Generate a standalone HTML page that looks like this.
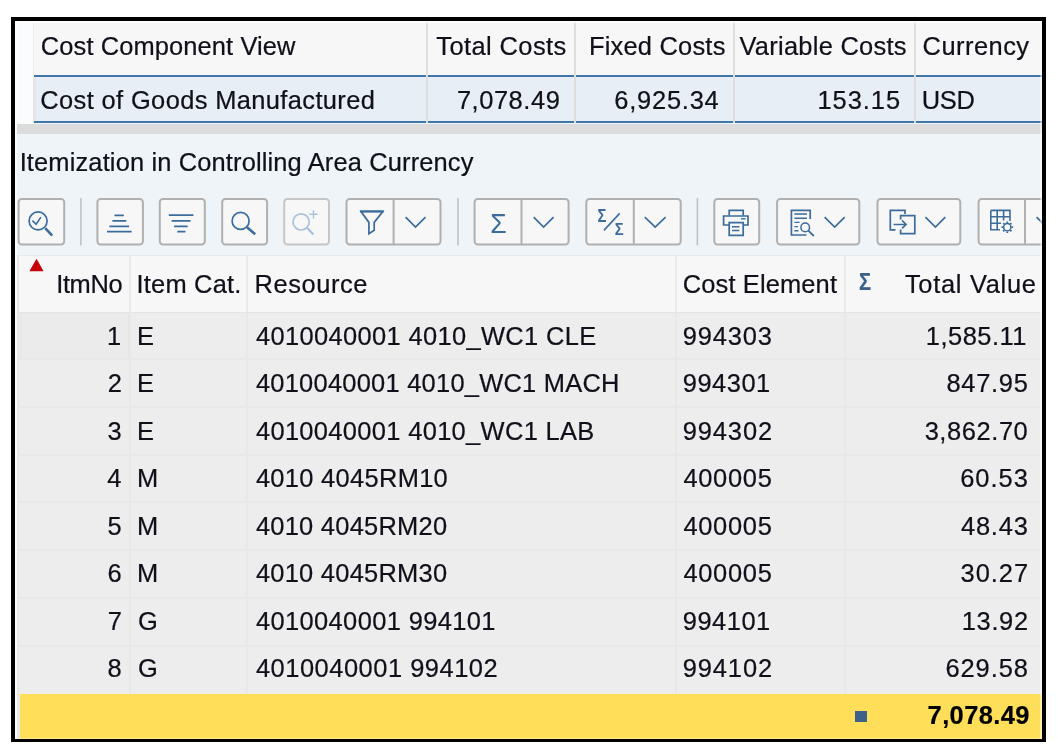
<!DOCTYPE html>
<html lang="en">
<head>
<meta charset="utf-8">
<title>Cost Component View</title>
<style>
html,body{margin:0;padding:0;background:#fff;}
body{width:1058px;height:755px;overflow:hidden;position:relative;font-family:"Liberation Sans",Arial,sans-serif;font-size:25.44px;color:#10101a;}
#frame{position:absolute;left:11px;top:17px;width:1027px;height:718px;border:4px solid #000;border-bottom-width:3px;overflow:hidden;background:#eff4f9;}
#in{position:absolute;left:-15px;top:-21px;width:1058px;height:755px;filter:blur(0.55px);}
.abs{position:absolute;}
.t{position:absolute;white-space:nowrap;line-height:30px;height:30px;-webkit-text-stroke:0.22px currentColor;}
.vl{position:absolute;width:1.6px;background:#dedede;}
.btn{position:absolute;top:198px;height:47.5px;box-sizing:border-box;border:2px solid #b0b0b0;border-radius:4.5px;background:#f7f7f7;}
.sep{position:absolute;top:198px;height:47.5px;width:1.5px;background:#c4c4c4;}
.dv{position:absolute;top:0;bottom:0;width:1.6px;background:#b0b0b0;}
svg{position:absolute;left:0;top:0;overflow:visible;}
#halo{position:absolute;left:0;top:0;right:0;bottom:0;box-sizing:border-box;border-top:2px solid rgba(255,255,255,.85);border-left:2px solid rgba(255,255,255,.9);border-right:2px solid rgba(255,255,255,.5);border-bottom:1px solid rgba(255,255,255,.3);pointer-events:none;}
</style>
</head>
<body>
<div id="frame"><div id="in">

<!-- top table -->
<div class="abs" style="left:15px;top:21px;width:19px;height:102.5px;background:#fbfcfe;"></div>
<div class="abs" style="left:33px;top:21px;width:1010px;height:55px;background:#f7f7f7;"></div>
<div class="abs" style="left:33px;top:77px;width:1010px;height:45px;background:#e8eef6;"></div>
<div class="abs" style="left:32.8px;top:21px;width:1.6px;height:54.5px;background:#ececec;"></div>
<div class="abs" style="left:32.8px;top:77px;width:3px;height:46px;background:#e6e6e6;"></div>
<div class="abs" style="left:34.2px;top:75.2px;width:1010px;height:2.2px;background:#4176a8;"></div>
<div class="abs" style="left:34.2px;top:121.1px;width:1010px;height:2.2px;background:#4176a8;"></div>
<div class="vl" style="left:426px;top:21px;height:102px;"></div>
<div class="vl" style="left:574px;top:21px;height:102px;"></div>
<div class="vl" style="left:733px;top:21px;height:102px;"></div>
<div class="vl" style="left:914.2px;top:21px;height:102px;"></div>
<div class="abs" style="left:17px;top:123.5px;width:1030px;height:10px;background:#dcdcdc;"></div>

<div id="tb">
<svg width="1058" height="755" viewBox="0 0 1058 755" fill="none" stroke="#3c6c9c" stroke-width="1.7" stroke-linecap="butt" stroke-linejoin="miter">
<rect x="18.6" y="199.0" width="45.6" height="45.5" rx="3.2" fill="#f7f7f7" stroke="#b0b0b0" stroke-width="2"/>
<path d="M80.9,198.0 V245.5" stroke="#c2c2c2" stroke-width="1.6"/>
<rect x="97.4" y="199.0" width="45.5" height="45.5" rx="3.2" fill="#f7f7f7" stroke="#b0b0b0" stroke-width="2"/>
<rect x="159.8" y="199.0" width="45.0" height="45.5" rx="3.2" fill="#f7f7f7" stroke="#b0b0b0" stroke-width="2"/>
<rect x="222.2" y="199.0" width="44.9" height="45.5" rx="3.2" fill="#f7f7f7" stroke="#b0b0b0" stroke-width="2"/>
<rect x="284.2" y="199.0" width="44.8" height="45.5" rx="3.2" fill="#f7f7f7" stroke="#c6c6c6" stroke-width="2"/>
<rect x="346.5" y="199.0" width="94.0" height="45.5" rx="3.2" fill="#f7f7f7" stroke="#b0b0b0" stroke-width="2"/><path d="M393.6,199.0 V244.5" stroke="#b0b0b0" stroke-width="2"/>
<path d="M458.0,198.0 V245.5" stroke="#c2c2c2" stroke-width="1.6"/>
<rect x="474.6" y="199.0" width="94.0" height="45.5" rx="3.2" fill="#f7f7f7" stroke="#b0b0b0" stroke-width="2"/><path d="M521.5,199.0 V244.5" stroke="#b0b0b0" stroke-width="2"/>
<rect x="586.3" y="199.0" width="94.4" height="45.5" rx="3.2" fill="#f7f7f7" stroke="#b0b0b0" stroke-width="2"/><path d="M633.8,199.0 V244.5" stroke="#b0b0b0" stroke-width="2"/>
<path d="M697.4,198.0 V245.5" stroke="#c2c2c2" stroke-width="1.6"/>
<rect x="714.3" y="199.0" width="44.9" height="45.5" rx="3.2" fill="#f7f7f7" stroke="#b0b0b0" stroke-width="2"/>
<rect x="777.1" y="199.0" width="82.2" height="45.5" rx="3.2" fill="#f7f7f7" stroke="#b0b0b0" stroke-width="2"/>
<rect x="877.5" y="199.0" width="82.8" height="45.5" rx="3.2" fill="#f7f7f7" stroke="#b0b0b0" stroke-width="2"/>
<rect x="978.6" y="199.0" width="95.4" height="45.5" rx="3.2" fill="#f7f7f7" stroke="#b0b0b0" stroke-width="2"/><path d="M1025.0,199.0 V244.5" stroke="#b0b0b0" stroke-width="2"/>
<!-- 1 detail -->
<circle cx="38.1" cy="220.9" r="9.0"/>
<path d="M45.2,228.2 L52.2,235.6" stroke-width="2.6"/>
<path d="M32.4,220.6 L36.1,224.3 L40.9,217.1" stroke-width="1.6"/>
<!-- 2 sort asc -->
<path d="M114.4,215.4 H123.8 M112.4,220.9 H126.3 M109.4,226.3 H129.1 M107,231.6 H131.6"/>
<!-- 3 sort desc -->
<path d="M168.8,215.2 H193.4 M171.6,220.9 H190.5 M174.1,226.3 H187.7 M177.3,231.7 H185.4"/>
<!-- 4 search -->
<circle cx="240.6" cy="220.9" r="8.5"/>
<path d="M247,227.3 L255.2,234.2" stroke-width="2.6"/>
<!-- 5 search next (disabled) -->
<g stroke="#a9c1da">
<circle cx="301.1" cy="221.9" r="8.1"/>
<path d="M307,227.8 L313.4,234.5" stroke-width="2.2"/>
<path d="M309.4,214.3 H317.6 M313.5,210.2 V218.4" stroke-width="1.4"/>
</g>
<!-- 6 filter -->
<path d="M361,211.5 H382.8 L374.2,222.4 V230.2 L368.9,233.6 V222.4 Z"/><path d="M360,211.4 H383.8" stroke-width="2.2"/>
<path d="M405.6,217.1 L415.5,227 L425.5,217.1" />
<!-- 7 sum -->
<text x="490.3" y="232.6" font-size="28.3" fill="#3c6c9c" stroke="none" font-family="Liberation Sans, sans-serif" transform="translate(490.3 0) scale(0.94 1) translate(-490.3 0)">Σ</text>
<path d="M533.7,217.1 L543.6,227 L553.6,217.1" />
<!-- 8 subtotal -->
<text x="597.4" y="222" font-size="17.8" font-weight="bold" fill="#3c6c9c" stroke="none" font-family="Liberation Sans, sans-serif" transform="translate(597.4 0) scale(0.84 1) translate(-597.4 0)">Σ</text>
<path d="M603.9,230.4 L619.7,213.4" stroke-width="1.6"/>
<text x="614.7" y="234.6" font-size="15.6" font-weight="bold" fill="#3c6c9c" stroke="none" font-family="Liberation Sans, sans-serif" transform="translate(614.7 0) scale(0.95 1) translate(-614.7 0)">Σ</text>
<path d="M644.8,217.1 L655.2,227 L665.6,217.1" />
<!-- 9 print -->
<path d="M729.2,215.4 V210.3 H743.2 V215.4"/>
<path d="M729,225 H723.6 V216 H748 V225 H743.4"/>
<path d="M729.2,222.6 H743.2 V235.4 H729.2 Z"/>
<path d="M732,226.7 H739.4 M732,230.4 H739.4" stroke-width="1.5"/>
<path d="M741,218.8 H745.6" stroke-width="1.4"/>
<!-- 10 view -->
<path d="M806.5,235 H791.4 V210.3 H810.2 V219"/>
<path d="M794.4,214 H807 M794.4,218.2 H807 M794.4,222.4 H799.5 M794.4,226.6 H798 M794.4,230.8 H798.5" stroke-width="1.4"/>
<circle cx="805.2" cy="227.4" r="4.3" stroke-width="1.5"/>
<path d="M808.4,230.6 L813.8,236" stroke-width="1.8"/>
<path d="M824.6,217.1 L834.7,227 L844.7,217.1" />
<!-- 11 export -->
<path d="M905,214 V210.3 H890.3 V229.8 H895.5" />
<path d="M900.6,219.5 V215.6 H914.8 V233.6 H900.6 V229.4"/>
<path d="M893.6,224.4 H906.2 M902,220.4 L906.2,224.4 L902,228.4" stroke-width="1.5"/>
<path d="M925.4,217.1 L935.4,227 L945.3,217.1" />
<!-- 12 layout -->
<path d="M990.8,210.4 H1010 V221 M990.8,210.4 V229.8 H1000 M990.8,216.8 H1010 M990.8,223.2 H1001 M997.2,210.4 V229.8 M1003.6,210.4 V220.5" stroke-width="1.6"/>
<circle cx="1007.3" cy="227.2" r="3.6" stroke-width="1.5"/>
<path d="M1007.3,221.4 V223 M1007.3,231.4 V233 M1001.5,227.2 H1003.1 M1011.5,227.2 H1013.1 M1003.2,223.1 L1004.3,224.2 M1010.3,230.2 L1011.4,231.3 M1003.2,231.3 L1004.3,230.2 M1010.3,224.2 L1011.4,223.1" stroke-width="1.8"/>
<path d="M1036.6,217.1 L1046.5,227 L1056.4,217.1" />
</svg>
</div>

<div id="tbl">
<div class="abs" style="left:17.4px;top:254.6px;width:1030px;height:490px;background:#e9e9e9;"></div>
<div class="abs" style="left:19.4px;top:256.2px;width:1030px;height:56px;background:#f7f7f7;"></div>
<div class="abs" style="left:19.4px;top:311.6px;width:1030px;height:1.8px;background:#e5e5e5;"></div>
<div class="abs" style="left:19.4px;top:313.3px;width:1030px;height:381px;background:#ededed;"></div>
<div class="abs" style="left:19.6px;top:313.4px;width:109px;height:45.2px;background:#ebebeb;border:1.2px solid #e6e6e6;box-sizing:border-box;"></div>
<div class="abs" style="left:19.4px;top:358.3px;width:1030px;height:2px;background:#e8e8e8;"></div>
<div class="abs" style="left:19.4px;top:406.0px;width:1030px;height:2px;background:#e8e8e8;"></div>
<div class="abs" style="left:19.4px;top:453.7px;width:1030px;height:2px;background:#e8e8e8;"></div>
<div class="abs" style="left:19.4px;top:501.4px;width:1030px;height:2px;background:#e8e8e8;"></div>
<div class="abs" style="left:19.4px;top:549.1px;width:1030px;height:2px;background:#e8e8e8;"></div>
<div class="abs" style="left:19.4px;top:596.8px;width:1030px;height:2px;background:#e8e8e8;"></div>
<div class="abs" style="left:19.4px;top:644.5px;width:1030px;height:2px;background:#e8e8e8;"></div>
<div class="abs" style="left:129.0px;top:256.2px;width:2px;height:55.4px;background:#e9e9e9;"></div>
<div class="abs" style="left:129.0px;top:313.3px;width:2px;height:380.3px;background:#e8e8e8;"></div>
<div class="abs" style="left:246.3px;top:256.2px;width:2px;height:55.4px;background:#e9e9e9;"></div>
<div class="abs" style="left:246.3px;top:313.3px;width:2px;height:380.3px;background:#e8e8e8;"></div>
<div class="abs" style="left:674.6px;top:256.2px;width:2px;height:55.4px;background:#e9e9e9;"></div>
<div class="abs" style="left:674.6px;top:313.3px;width:2px;height:380.3px;background:#e8e8e8;"></div>
<div class="abs" style="left:844.4px;top:256.2px;width:2px;height:55.4px;background:#e9e9e9;"></div>
<div class="abs" style="left:844.4px;top:313.3px;width:2px;height:380.3px;background:#e8e8e8;"></div>
<svg width="1058" height="755" viewBox="0 0 1058 755"><path d="M36.5,258.8 L43.6,271.2 H29.4 Z" fill="#c4000a"/></svg>
<div class="abs" style="left:19.5px;top:693.6px;width:1030px;height:50px;background:#ffdf5a;"></div>
<div class="abs" style="left:854.8px;top:710.8px;width:12px;height:11px;background:#3e6189;"></div>
<div class="t" id="sg" style="left:859.3px;top:267.1px;font-size:23.4px;font-weight:bold;color:#3b618b;transform:scaleX(0.86);transform-origin:0 0;">Σ</div>
</div>

<div id="tx">
<div class="t" id="h1" style="left:40.81px;top:31.00px;letter-spacing:0.115px;">Cost Component View</div>
<div class="t" id="h2" style="left:436.33px;top:31.00px;letter-spacing:0.405px;">Total Costs</div>
<div class="t" id="h3" style="left:588.92px;top:31.00px;letter-spacing:0.218px;">Fixed Costs</div>
<div class="t" id="h4" style="left:739.49px;top:31.00px;letter-spacing:0.267px;">Variable Costs</div>
<div class="t" id="h5" style="left:922.61px;top:31.00px;letter-spacing:0.463px;">Currency</div>
<div class="t" id="d1" style="left:40.31px;top:84.60px;letter-spacing:0.375px;">Cost of Goods Manufactured</div>
<div class="t" id="d2" style="left:456.90px;top:84.60px;letter-spacing:0.553px;">7,078.49</div>
<div class="t" id="d3" style="left:614.31px;top:84.60px;letter-spacing:0.771px;">6,925.34</div>
<div class="t" id="d4" style="left:817.47px;top:84.60px;letter-spacing:0.956px;">153.15</div>
<div class="t" id="d5" style="left:921.74px;top:84.60px;letter-spacing:-0.320px;">USD</div>
<div class="t" id="ttl" style="left:19.66px;top:146.60px;letter-spacing:0.143px;">Itemization in Controlling Area Currency</div>
<div class="t" id="hc1" style="left:56.26px;top:269.20px;letter-spacing:-0.388px;">ItmNo</div>
<div class="t" id="hc2" style="left:136.56px;top:269.20px;letter-spacing:0.195px;">Item Cat.</div>
<div class="t" id="hc3" style="left:254.52px;top:269.20px;letter-spacing:0.590px;">Resource</div>
<div class="t" id="hc4" style="left:682.81px;top:269.20px;letter-spacing:0.134px;">Cost Element</div>
<div class="t" id="hc5" style="left:904.93px;top:269.20px;letter-spacing:0.701px;">Total Value</div>
<div class="t" id="a0" style="left:106.89px;top:320.90px;">1</div>
<div class="t" id="b0" style="left:137.12px;top:320.90px;">E</div>
<div class="t" id="c0" style="left:255.92px;top:320.90px;letter-spacing:0.363px;">4010040001 4010_WC1 CLE</div>
<div class="t" id="d0" style="left:682.81px;top:320.90px;letter-spacing:0.842px;">994303</div>
<div class="t" id="e0" style="left:925.87px;top:320.90px;letter-spacing:0.490px;">1,585.11</div>
<div class="t" id="a1" style="left:107.73px;top:368.34px;">2</div>
<div class="t" id="b1" style="left:137.12px;top:368.34px;">E</div>
<div class="t" id="c1" style="left:255.92px;top:368.34px;letter-spacing:0.250px;">4010040001 4010_WC1 MACH</div>
<div class="t" id="d1" style="left:682.81px;top:368.34px;letter-spacing:0.508px;">994301</div>
<div class="t" id="e1" style="left:946.50px;top:368.34px;letter-spacing:0.710px;">847.95</div>
<div class="t" id="a2" style="left:107.56px;top:415.78px;">3</div>
<div class="t" id="b2" style="left:137.12px;top:415.78px;">E</div>
<div class="t" id="c2" style="left:255.92px;top:415.78px;letter-spacing:0.338px;">4010040001 4010_WC1 LAB</div>
<div class="t" id="d2" style="left:682.81px;top:415.78px;letter-spacing:0.876px;">994302</div>
<div class="t" id="e2" style="left:924.64px;top:415.78px;letter-spacing:0.589px;">3,862.70</div>
<div class="t" id="a3" style="left:107.19px;top:463.22px;">4</div>
<div class="t" id="b3" style="left:137.12px;top:463.22px;">M</div>
<div class="t" id="c3" style="left:255.92px;top:463.22px;letter-spacing:0.312px;">4010 4045RM10</div>
<div class="t" id="d3" style="left:683.42px;top:463.22px;letter-spacing:0.710px;">400005</div>
<div class="t" id="e3" style="left:960.21px;top:463.22px;letter-spacing:1.010px;">60.53</div>
<div class="t" id="a4" style="left:107.51px;top:510.66px;">5</div>
<div class="t" id="b4" style="left:137.12px;top:510.66px;">M</div>
<div class="t" id="c4" style="left:255.92px;top:510.66px;letter-spacing:0.254px;">4010 4045RM20</div>
<div class="t" id="d4" style="left:683.42px;top:510.66px;letter-spacing:0.710px;">400005</div>
<div class="t" id="e4" style="left:960.92px;top:510.66px;letter-spacing:0.832px;">48.43</div>
<div class="t" id="a5" style="left:107.56px;top:558.10px;">6</div>
<div class="t" id="b5" style="left:137.12px;top:558.10px;">M</div>
<div class="t" id="c5" style="left:255.92px;top:558.10px;letter-spacing:0.254px;">4010 4045RM30</div>
<div class="t" id="d5" style="left:683.42px;top:558.10px;letter-spacing:0.710px;">400005</div>
<div class="t" id="e5" style="left:960.54px;top:558.10px;letter-spacing:0.970px;">30.27</div>
<div class="t" id="a6" style="left:107.73px;top:605.54px;">7</div>
<div class="t" id="b6" style="left:137.93px;top:605.54px;">G</div>
<div class="t" id="c6" style="left:255.92px;top:605.54px;letter-spacing:0.386px;">4010040001 994101</div>
<div class="t" id="d6" style="left:682.81px;top:605.54px;letter-spacing:0.508px;">994101</div>
<div class="t" id="e6" style="left:961.77px;top:605.54px;letter-spacing:0.662px;">13.92</div>
<div class="t" id="a7" style="left:107.55px;top:652.98px;">8</div>
<div class="t" id="b7" style="left:137.93px;top:652.98px;">G</div>
<div class="t" id="c7" style="left:255.92px;top:652.98px;letter-spacing:0.519px;">4010040001 994102</div>
<div class="t" id="d7" style="left:682.81px;top:652.98px;letter-spacing:0.876px;">994102</div>
<div class="t" id="e7" style="left:945.41px;top:652.98px;letter-spacing:0.936px;">629.58</div>
<div class="t" id="tot" style="left:927.61px;top:700.40px;letter-spacing:0.400px;font-weight:bold;color:#000;">7,078.49</div>
</div>

</div><div id="halo"></div></div>
</body>
</html>
